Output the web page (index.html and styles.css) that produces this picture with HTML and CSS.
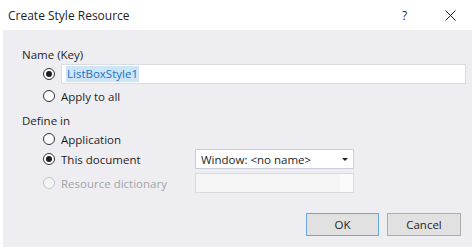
FILE: index.html
```html
<!DOCTYPE html>
<html lang="en">
<head>
  <meta charset="UTF-8" />
  <title>Create Style Resource</title>
  <link rel="stylesheet" href="styles.css">
</head>
<body>
  <div class="titlebar">
    <span class="title">Create Style Resource</span>
    <span class="help">?</span>
    <span class="close">
      <svg width="11" height="11" viewBox="0 0 11 11">
        <path d="M0.5 0.5 L10.5 10.5 M10.5 0.5 L0.5 10.5" stroke="#1e1e1e" stroke-width="1" fill="none"/>
      </svg>
    </span>
  </div>

  <div class="panel">
    <!-- Name -->
    <div class="group-label">Name (Key)</div>
    <div class="row row-name">
      <span class="radio checked"></span>
      <div class="textbox"><span class="selected">ListBoxStyle1</span></div>
    </div>
    <div class="row row-apply">
      <span class="radio"></span>
      <span class="label">Apply to all</span>
    </div>

    <!-- Define in -->
    <div class="group-label define">Define in</div>
    <div class="row">
      <span class="radio"></span>
      <span class="label">Application</span>
    </div>
    <div class="row row-doc">
      <span class="radio checked"></span>
      <span class="label wide">This document</span>
      <div class="combo">
        <span>Window: &lt;no name&gt;</span>
        <span class="arrow"></span>
      </div>
    </div>
    <div class="row row-dict disabled">
      <span class="radio"></span>
      <span class="label wide">Resource dictionary</span>
      <div class="combo off"><span class="combo-end"></span></div>
    </div>

    <div class="buttons">
      <button class="btn default">OK</button>
      <button class="btn">Cancel</button>
    </div>
  </div>
</body>
</html>
```

FILE: styles.css
```css
body {
  margin: 0;
  background: #ffffff;
  font-family: "Open Sans", "Noto Sans", sans-serif;
  font-size: 11.5px;
  color: #1e1e1e;
  width: 474px;
  height: 249px;
  overflow: hidden;
}

.titlebar {
  display: flex;
  align-items: center;
  height: 30px;
  padding-left: 8px;
}

.title {
  flex: 1;
  font-size: 12px;
}

.help {
  font-size: 12px;
  width: 43px;
}

.close {
  display: flex;
  width: 29px;
}

.panel {
  margin: 0 2px 0 3px;
  height: 217px;
  box-sizing: border-box;
  background: #eeeef2;
  padding: 16px 11px 0 19px;
}

.group-label {
  height: 18px;
  line-height: 18px;
}

.group-label.define {
  margin-top: 7px;
}

.row {
  display: flex;
  align-items: center;
  height: 18px;
  padding-left: 21px;
}

.row-name {
  height: 20px;
}

.row-apply {
  margin-top: 3px;
}

.row-doc {
  height: 20px;
  margin-top: 1px;
}

.row-dict {
  height: 20px;
  margin-top: 4px;
}

.radio {
  width: 12px;
  height: 12px;
  box-sizing: border-box;
  border: 1px solid #333337;
  border-radius: 50%;
  background: #ffffff;
  display: flex;
  align-items: center;
  justify-content: center;
  margin-right: 6px;
  flex: none;
}

.radio.checked::after {
  content: "";
  width: 6px;
  height: 6px;
  border-radius: 50%;
  background: #1e1e1e;
}

.disabled .radio {
  border-color: #c2c3c9;
  background: #f5f5f5;
}

.disabled .label {
  color: #a2a4a5;
}

.label.wide {
  width: 134px;
}

.textbox {
  flex: none;
  width: 405px;
  height: 20px;
  box-sizing: border-box;
  background: #ffffff;
  border: 1px solid #dcdce0;
  display: flex;
  align-items: center;
  padding-left: 4px;
}

.selected {
  background: #cde6f7;
  color: #1e72c4;
  padding: 0 1px;
  line-height: 16px;
}

.combo {
  width: 159px;
  height: 20px;
  box-sizing: border-box;
  background: #ffffff;
  border: 1px solid #cccedb;
  display: flex;
  align-items: center;
  justify-content: space-between;
  padding: 0 5px 0 5px;
}

.arrow {
  width: 0;
  height: 0;
  border-left: 3px solid transparent;
  border-right: 3px solid transparent;
  border-top: 3px solid #1e1e1e;
}

.combo.off {
  background: #f5f5f5;
  border-color: #d9d9de;
  padding: 0;
  justify-content: flex-end;
}

.combo-end {
  width: 13px;
  height: 18px;
  background: #fbfbfb;
}

.buttons {
  display: flex;
  justify-content: flex-end;
  gap: 8px;
  margin-top: 20px;
}

.btn {
  width: 74px;
  height: 23px;
  font-family: "Open Sans", "Noto Sans", sans-serif;
  font-size: 11.5px;
  color: #1e1e1e;
  background: #e1e1e1;
  border: 1px solid #adadad;
  padding: 0;
}

.btn.default {
  width: 73px;
  border-color: #6aa6e0;
}
```
